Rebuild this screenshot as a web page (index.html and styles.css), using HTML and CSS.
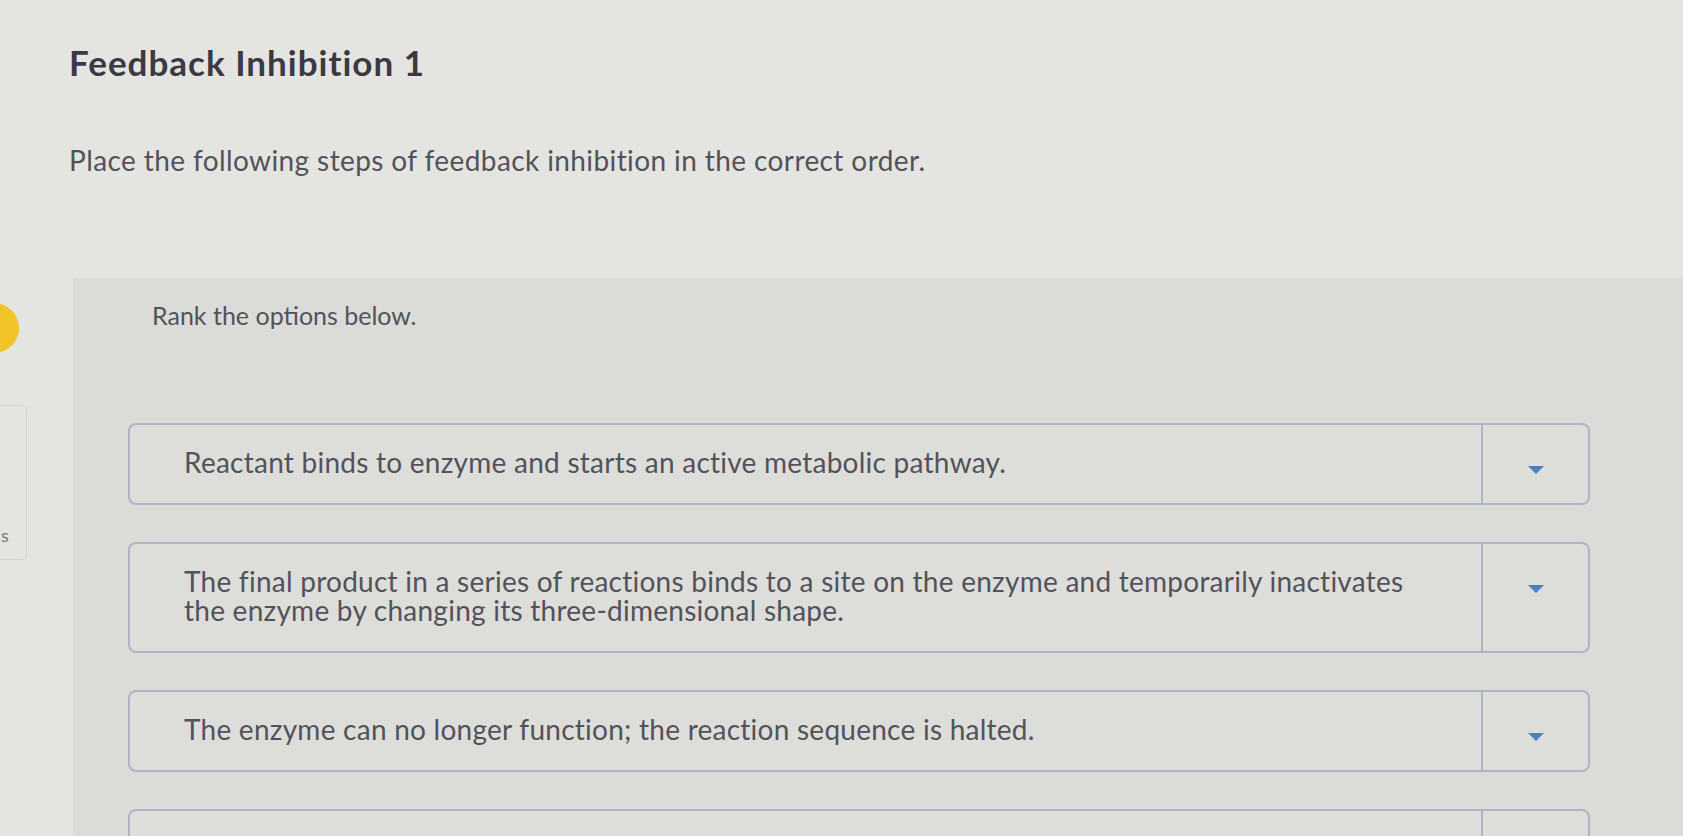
FILE: index.html
```html
<!DOCTYPE html>
<html lang="en">
  <head>
    <meta charset="UTF-8" />
    <meta name="viewport" content="width=device-width, initial-scale=1.0" />
    <title>Feedback Inhibition 1</title>
    <link rel="stylesheet" href="styles.css">
  </head>
  <body>
    <header class="question-header">
      <h1>Feedback Inhibition 1</h1>
      <p class="prompt">Place the following steps of feedback inhibition in the correct order.</p>
    </header>

    <div class="workspace">
      <aside class="side-rail">
        <div class="status-dot"></div>
        <div class="side-tab"><span>s</span></div>
      </aside>

      <main class="ranking-panel">
        <p class="instructions">Rank the options below.</p>

        <ol class="rank-list">
          <li class="rank-item">
            <div class="rank-text">Reactant binds to enzyme and starts an active metabolic pathway.</div>
            <button class="rank-select" aria-label="Choose rank">
              <svg width="16" height="8" viewBox="0 0 16 8"><polygon points="0,0 16,0 8,8" /></svg>
            </button>
          </li>
          <li class="rank-item">
            <div class="rank-text">The final product in a series of reactions binds to a site on the enzyme and temporarily inactivates the enzyme by changing its three-dimensional shape.</div>
            <button class="rank-select" aria-label="Choose rank">
              <svg width="16" height="8" viewBox="0 0 16 8"><polygon points="0,0 16,0 8,8" /></svg>
            </button>
          </li>
          <li class="rank-item">
            <div class="rank-text">The enzyme can no longer function; the reaction sequence is halted.</div>
            <button class="rank-select" aria-label="Choose rank">
              <svg width="16" height="8" viewBox="0 0 16 8"><polygon points="0,0 16,0 8,8" /></svg>
            </button>
          </li>
          <li class="rank-item">
            <div class="rank-text"></div>
            <button class="rank-select" aria-label="Choose rank">
              <svg width="16" height="8" viewBox="0 0 16 8"><polygon points="0,0 16,0 8,8" /></svg>
            </button>
          </li>
        </ol>
      </main>
    </div>
  </body>
</html>
```

FILE: styles.css
```css
:root {
  --page-bg: #e4e4e1;
  --panel-bg: #dbdbd7;
  --item-bg: #dddddA;
  --heading-color: #3a3944;
  --text-color: #53525b;
  --border-color: #aeb4c5;
  --accent-color: #4d7ec4;
  --font-family: "Lato", "Open Sans", sans-serif;
}

* {
  margin: 0;
  padding: 0;
  box-sizing: border-box;
}

html,
body {
  height: 100%;
  overflow: hidden;
}

body {
  font-family: var(--font-family);
  color: var(--text-color);
  background-color: var(--page-bg);
}

.question-header {
  padding: 41px 0 0 69px;
}

h1 {
  font-size: 35px;
  line-height: 42px;
  font-weight: 700;
  letter-spacing: 1px;
  color: var(--heading-color);
}

.prompt {
  margin-top: 60px;
  font-size: 28px;
  line-height: 34px;
  letter-spacing: 0.4px;
}

.workspace {
  display: flex;
  margin-top: 101px;
  min-height: 600px;
}

.side-rail {
  width: 73px;
  flex-shrink: 0;
}

.status-dot {
  width: 50px;
  height: 50px;
  margin: 25px 0 0 -31px;
  border-radius: 50%;
  background-color: #f2c42a;
}

.side-tab {
  width: 38px;
  height: 155px;
  margin: 52px 0 0 -11px;
  padding: 118px 0 0 11px;
  border: 1px solid #d4d4d1;
  border-radius: 6px;
  font-size: 18px;
  color: #7a7a80;
}

.ranking-panel {
  flex: 1;
  background-color: var(--panel-bg);
  padding: 21px 93px 0 55px;
}

.instructions {
  margin-left: 24px;
  font-size: 25px;
  line-height: 32px;
}

.rank-list {
  list-style: none;
  margin-top: 92px;
  display: flex;
  flex-direction: column;
  gap: 37px;
}

.rank-item {
  display: flex;
  min-height: 82px;
  background-color: var(--item-bg);
  border: 2px solid var(--border-color);
  border-radius: 8px;
}

.rank-text {
  flex: 1;
  padding: 23px 60px 26px 54px;
  font-size: 28px;
  line-height: 29px;
  letter-spacing: 0.25px;
}

.rank-select {
  width: 107px;
  flex-shrink: 0;
  display: flex;
  justify-content: center;
  padding-top: 41px;
  background: none;
  border: none;
  border-left: 2px solid var(--border-color);
  cursor: pointer;
}

.rank-select svg {
  fill: var(--accent-color);
}
```
